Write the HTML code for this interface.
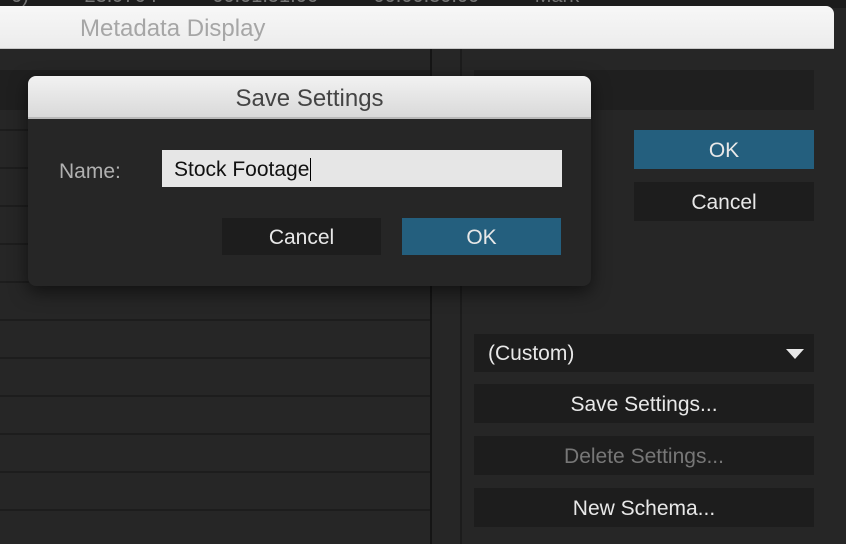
<!DOCTYPE html>
<html><head><style>
*{margin:0;padding:0;box-sizing:border-box}
body{width:846px;height:544px;overflow:hidden;background:#262626;position:relative;font-family:"Liberation Sans","DejaVu Sans",sans-serif}
.a{position:absolute}
.top{left:0;top:0;width:846px;height:8px;background:#1c1c1c;overflow:hidden}
.top span{position:absolute;top:-14px;left:0;color:#777;font-size:20px;white-space:pre;line-height:20px}
.win{left:0;top:6px;width:834px;height:538px;background:#262626;border-top-right-radius:8px;overflow:hidden}
.tb{left:0;top:0;width:834px;height:43px;background:linear-gradient(#f7f7f7,#ececec);border-bottom:1px solid #c8c8c8;color:#a6a6a6;font-size:24px;line-height:46px;padding-left:80px}
.hl{height:2px;background:#1d1d1d}
.btn{background:#1d1d1d;color:#e8e8e8;font-size:21px;text-align:center;display:flex;align-items:center;justify-content:center;padding-top:2px}
.blue{background:#245f7e}
.dlg{left:28px;top:76px;width:563px;height:210px;background:#262626;border-radius:8px;box-shadow:0 6px 18px rgba(0,0,0,.55);overflow:hidden}
</style></head><body>
<div class="a top"><span>  0)          23.976 f          00:01:51:06          00:00:30:00          Mark</span></div>
<div class="a win">
 <div class="a tb">Metadata Display</div>
 <div class="a" style="left:0;top:64px;width:430px;height:40px;background:#1f1f1f"></div>
 <div class="a hl" style="left:0;top:123px;width:430px"></div>
 <div class="a hl" style="left:0;top:161px;width:430px"></div>
 <div class="a hl" style="left:0;top:199px;width:430px"></div>
 <div class="a hl" style="left:0;top:237px;width:430px"></div>
 <div class="a hl" style="left:0;top:275px;width:430px"></div>
 <div class="a hl" style="left:0;top:313px;width:430px"></div>
 <div class="a hl" style="left:0;top:351px;width:430px"></div>
 <div class="a hl" style="left:0;top:389px;width:430px"></div>
 <div class="a hl" style="left:0;top:427px;width:430px"></div>
 <div class="a hl" style="left:0;top:465px;width:430px"></div>
 <div class="a hl" style="left:0;top:503px;width:430px"></div>
 <div class="a" style="left:430px;top:43px;width:2px;height:495px;background:#151515"></div>
 <div class="a" style="left:460px;top:43px;width:2px;height:495px;background:#1c1c1c"></div>
 <div class="a" style="left:474px;top:64px;width:340px;height:40px;background:#1f1f1f"></div>
 <div class="a btn blue" style="left:634px;top:124px;width:180px;height:39px">OK</div>
 <div class="a btn" style="left:634px;top:176px;width:180px;height:39px">Cancel</div>
 <div class="a btn" style="left:474px;top:328px;width:340px;height:38px;justify-content:flex-start;padding-left:14px">(Custom)</div>
 <div class="a" style="left:786px;top:343px;width:0;height:0;border-left:9px solid transparent;border-right:9px solid transparent;border-top:10px solid #e8e8e8"></div>
 <div class="a btn" style="left:474px;top:378px;width:340px;height:39px">Save Settings...</div>
 <div class="a btn" style="left:474px;top:430px;width:340px;height:39px;color:#777">Delete Settings...</div>
 <div class="a btn" style="left:474px;top:482px;width:340px;height:39px">New Schema...</div>
</div>
<div class="a" style="left:834px;top:49px;width:12px;height:495px;background:#262626"></div>
<div class="a dlg">
 <div class="a" style="left:0;top:0;width:563px;height:43px;background:linear-gradient(#f2f2f2,#d9d9d9);border-bottom:2px solid #b8b8b8;color:#444;font-size:24px;text-align:center;line-height:46px">Save Settings</div>
 <div class="a" style="left:31px;top:84px;color:#b0b0b0;font-size:21px">Name:</div>
 <div class="a" style="left:134px;top:74px;width:400px;height:37px;background:#e6e6e6;color:#111;font-size:21px;line-height:39px;padding-left:12px">Stock Footage<span style="border-left:1px solid #000;margin-left:1px"></span></div>
 <div class="a btn" style="left:194px;top:142px;width:159px;height:37px">Cancel</div>
 <div class="a btn blue" style="left:374px;top:142px;width:159px;height:37px">OK</div>
</div>
</body></html>
